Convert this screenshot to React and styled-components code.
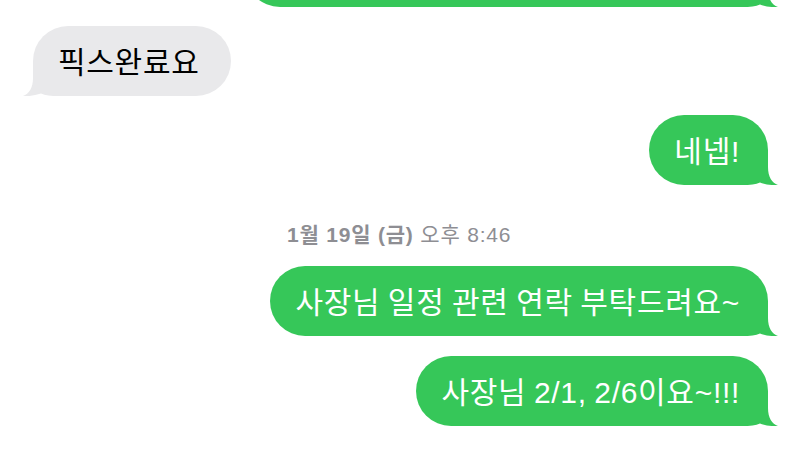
import React from 'react';
import styled, { createGlobalStyle } from 'styled-components';

const GlobalStyle = createGlobalStyle`
  html, body {
    margin: 0;
    padding: 0;
    background: #ffffff;
  }
  body {
    font-family: "Liberation Sans", "Noto Sans CJK KR", sans-serif;
    overflow: hidden;
  }
`;

const GREEN = '#36c759';
const GRAY = '#e9e9eb';

const Thread = styled.div`
  width: 800px;
  height: 455px;
  overflow: hidden;
  display: flex;
  flex-direction: column;
  padding: 0 32px 0 33px;
  box-sizing: border-box;
`;

const Row = styled.div`
  display: flex;
  justify-content: ${(p) => (p.$sent ? 'flex-end' : 'flex-start')};
  margin-top: ${(p) => p.$gap}px;
`;

const Bubble = styled.div`
  position: relative;
  height: 70px;
  display: flex;
  align-items: center;
  padding: ${(p) => (p.$sent ? '0 28px 0 25px' : '0 31px 0 25px')};
  border-radius: 35px;
  background: ${(p) => (p.$sent ? GREEN : GRAY)};
  color: ${(p) => (p.$sent ? '#ffffff' : '#000000')};
  font-size: 30px;
  letter-spacing: 0.7px;
  word-spacing: -1.5px;
  white-space: nowrap;
`;

const BubbleText = styled.span`
  position: relative;
  z-index: 1;
  margin-top: -2px;
`;

const CutBubble = styled(Bubble)`
  width: 523px;
  padding: 0;
  margin-top: -63px;
`;

const Tail = styled.svg`
  position: absolute;
  bottom: 0;
  width: 50px;
  height: 40px;
  z-index: 0;
  ${(p) => (p.$sent ? 'right: -12px;' : 'left: -12px; transform: scaleX(-1);')}
`;

const Stamp = styled.div`
  margin: 39px 0 0 254px;
  height: 22px;
  line-height: 22px;
  font-size: 21px;
  letter-spacing: 0.8px;
  color: #8e8e93;
  white-space: nowrap;
`;

const StampDate = styled.span`
  font-weight: 600;
`;

function BubbleTail({ sent }) {
  return (
    <Tail $sent={sent} viewBox="0 0 50 40">
      <path
        d="M3 5 L38 5 L38 22 C38 32 42 38 48 40 C42 40.5 36 39.5 30 37.5 C26 39.5 20 40 12 40 L3 40 Z"
        fill={sent ? GREEN : GRAY}
      />
    </Tail>
  );
}

function Message({ sent, gap, children }) {
  return (
    <Row $sent={sent} $gap={gap}>
      <Bubble $sent={sent}>
        <BubbleText>{children}</BubbleText>
        <BubbleTail sent={sent} />
      </Bubble>
    </Row>
  );
}

export default function App() {
  return (
    <>
      <GlobalStyle />
      <Thread>
        <Row $sent $gap={0}>
          <CutBubble $sent>
            <BubbleTail sent />
          </CutBubble>
        </Row>
        <Message gap={19}>픽스완료요</Message>
        <Message sent gap={19}>네넵!</Message>
        <Stamp>
          <StampDate>1월 19일 (금)</StampDate> 오후 8:46
        </Stamp>
        <Message sent gap={20}>사장님 일정 관련 연락 부탁드려요~</Message>
        <Message sent gap={20}>사장님 2/1, 2/6이요~!!!</Message>
      </Thread>
    </>
  );
}
